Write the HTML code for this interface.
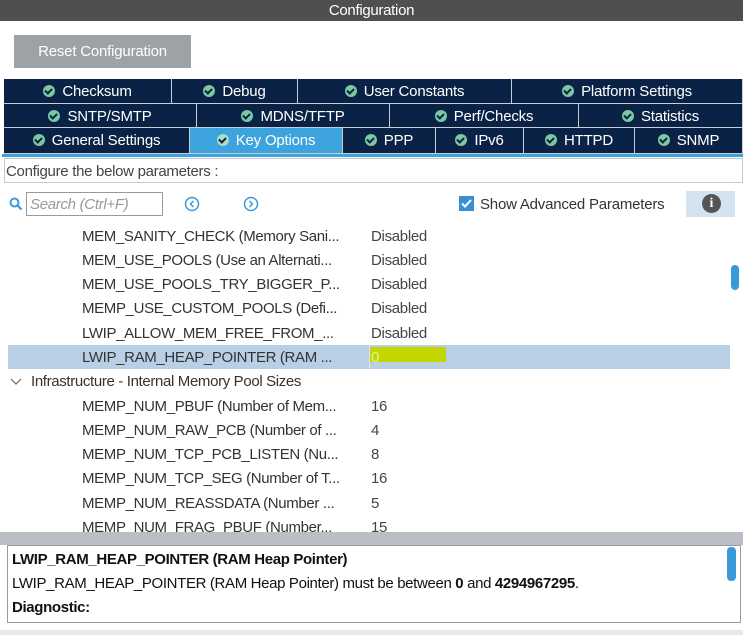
<!DOCTYPE html>
<html><head><style>
*{margin:0;padding:0;box-sizing:border-box}
body{width:743px;height:635px;background:#fff;font-family:"Liberation Sans",sans-serif;position:relative;overflow:hidden;color:#222}
.a{position:absolute;white-space:nowrap}
.title{left:0;top:0;width:743px;height:21px;background:#4f4f4f;color:#fff;font-size:15px;text-align:center;line-height:22px;letter-spacing:-0.3px}
.btn{left:14px;top:35px;width:177px;height:33px;background:#9da2a7;color:#fff;font-size:15px;line-height:34px;text-align:center;letter-spacing:-0.2px}
.tab{position:absolute;background:#0b2247;color:#fff;font-size:15px;text-align:center;border-right:1px solid #c9ced6;border-bottom:1px solid #c9ced6;letter-spacing:-0.2px}
.tab i{display:inline-block;width:12px;height:12px;border-radius:50%;background:#7cc8a0;margin-right:7px;vertical-align:-1px;position:relative}
.tab i:after{content:"";position:absolute;left:3px;top:2px;width:3px;height:5px;border:solid #0b2247;border-width:0 2px 2px 0;transform:rotate(45deg)}
.row{position:absolute;left:82px;font-size:15px;letter-spacing:-0.35px;color:#333;height:24px;line-height:26px}
.val{position:absolute;left:371px;font-size:15px;color:#444;letter-spacing:-0.3px;height:24px;line-height:26px}
</style></head><body>
<div class="a title">Configuration</div>
<div class="a btn">Reset Configuration</div>

<div class="tab" style="left:4px;top:79px;width:168px;height:25px;line-height:26px"><i></i>Checksum</div>
<div class="tab" style="left:172px;top:79px;width:126px;height:25px;line-height:26px"><i></i>Debug</div>
<div class="tab" style="left:298px;top:79px;width:214px;height:25px;line-height:26px"><i></i>User Constants</div>
<div class="tab" style="left:512px;top:79px;width:231px;height:25px;line-height:26px"><i></i>Platform Settings</div>
<div class="tab" style="left:4px;top:104px;width:193px;height:24px;line-height:25px"><i></i>SNTP/SMTP</div>
<div class="tab" style="left:197px;top:104px;width:193px;height:24px;line-height:25px"><i></i>MDNS/TFTP</div>
<div class="tab" style="left:390px;top:104px;width:189px;height:24px;line-height:25px"><i></i>Perf/Checks</div>
<div class="tab" style="left:579px;top:104px;width:164px;height:24px;line-height:25px"><i></i>Statistics</div>
<div class="tab" style="left:4px;top:128px;width:186px;height:26px;line-height:26px"><i></i>General Settings</div>
<div class="tab" style="left:190px;top:128px;width:153px;height:26px;line-height:26px;background:#3ca3dc"><i style="background:#a8dcc4"></i>Key Options</div>
<div class="tab" style="left:343px;top:128px;width:93px;height:26px;line-height:26px"><i></i>PPP</div>
<div class="tab" style="left:436px;top:128px;width:88px;height:26px;line-height:26px"><i></i>IPv6</div>
<div class="tab" style="left:524px;top:128px;width:111px;height:26px;line-height:26px"><i></i>HTTPD</div>
<div class="tab" style="left:635px;top:128px;width:108px;height:26px;line-height:26px"><i></i>SNMP</div>
<div class="a" style="left:2px;top:154px;width:741px;height:3px;background:#3ca3dc"></div>

<div class="a" style="left:4px;top:158px;width:739px;height:25px;border:1px solid #c8c8c8;font-size:15px;line-height:25px;color:#444;padding-left:1px;letter-spacing:-0.3px">Configure the below parameters :</div>

<svg class="a" style="left:9px;top:197px" width="14" height="14"><circle cx="5.5" cy="5.5" r="4" fill="none" stroke="#3a9ad9" stroke-width="2"/><line x1="8.5" y1="8.5" x2="12.5" y2="12.5" stroke="#3a9ad9" stroke-width="2.2"/></svg>
<div class="a" style="left:26px;top:192px;width:137px;height:24px;border:1px solid #999;font-size:15px;font-style:italic;color:#999;line-height:24px;padding-left:3px;letter-spacing:-0.3px">Search (Ctrl+F)</div>
<svg class="a" style="left:184px;top:196px" width="16" height="16"><circle cx="8" cy="8" r="6.5" fill="none" stroke="#3a9ad9" stroke-width="1.5"/><path d="M9.5 5 L6.5 8 L9.5 11" fill="none" stroke="#3a9ad9" stroke-width="1.5"/></svg>
<svg class="a" style="left:243px;top:196px" width="16" height="16"><circle cx="8" cy="8" r="6.5" fill="none" stroke="#3a9ad9" stroke-width="1.5"/><path d="M6.5 5 L9.5 8 L6.5 11" fill="none" stroke="#3a9ad9" stroke-width="1.5"/></svg>
<div class="a" style="left:459px;top:196px;width:15px;height:15px;background:#3a8fd0"></div>
<svg class="a" style="left:459px;top:196px" width="15" height="15"><path d="M3 7.5 L6 10.5 L12 4" fill="none" stroke="#fff" stroke-width="2"/></svg>
<div class="a" style="left:480px;top:192px;font-size:15px;line-height:25px;color:#333;letter-spacing:-0.2px">Show Advanced Parameters</div>
<div class="a" style="left:686px;top:191px;width:49px;height:26px;background:#d3e3f0"></div>
<div class="a" style="left:702px;top:194px;width:19px;height:19px;border-radius:50%;background:#555;color:#fff;font-weight:bold;font-size:14px;text-align:center;line-height:19px;font-family:'Liberation Serif',serif">i</div>

<div class="a" style="left:8px;top:345px;width:722px;height:24px;background:#b9cfe6"></div>
<div class="a" style="left:370px;top:347px;width:76px;height:15px;background:#c4d600"></div>
<div class="a" style="left:369px;top:345px;width:1px;height:24px;background:#dfe8f2"></div>

<div class="row" style="top:224px">MEM_SANITY_CHECK (Memory Sani...</div><div class="val" style="top:224px">Disabled</div>
<div class="row" style="top:248px">MEM_USE_POOLS (Use an Alternati...</div><div class="val" style="top:248px">Disabled</div>
<div class="row" style="top:272px">MEM_USE_POOLS_TRY_BIGGER_P...</div><div class="val" style="top:272px">Disabled</div>
<div class="row" style="top:296px">MEMP_USE_CUSTOM_POOLS (Defi...</div><div class="val" style="top:296px">Disabled</div>
<div class="row" style="top:321px">LWIP_ALLOW_MEM_FREE_FROM_...</div><div class="val" style="top:321px">Disabled</div>
<div class="row" style="top:345px">LWIP_RAM_HEAP_POINTER (RAM ...</div><div class="val" style="top:345px;color:#e8ee90">0</div>
<svg class="a" style="left:10px;top:378px" width="12" height="8"><path d="M1 1 L6 6 L11 1" fill="none" stroke="#666" stroke-width="1.2"/></svg>
<div class="row" style="top:369px;left:31px">Infrastructure - Internal Memory Pool Sizes</div>
<div class="row" style="top:394px">MEMP_NUM_PBUF (Number of Mem...</div><div class="val" style="top:394px">16</div>
<div class="row" style="top:418px">MEMP_NUM_RAW_PCB (Number of ...</div><div class="val" style="top:418px">4</div>
<div class="row" style="top:442px">MEMP_NUM_TCP_PCB_LISTEN (Nu...</div><div class="val" style="top:442px">8</div>
<div class="row" style="top:466px">MEMP_NUM_TCP_SEG (Number of T...</div><div class="val" style="top:466px">16</div>
<div class="row" style="top:491px">MEMP_NUM_REASSDATA (Number ...</div><div class="val" style="top:491px">5</div>
<div class="row" style="top:515px">MEMP_NUM_FRAG_PBUF (Number...</div><div class="val" style="top:515px">15</div>

<div class="a" style="left:731px;top:265px;width:8px;height:25px;border-radius:4px;background:#3a9ad9"></div>
<div class="a" style="left:0;top:532px;width:743px;height:13px;background:#b9bfc4"></div>
<div class="a" style="left:0;top:545px;width:743px;height:90px;background:#fff"></div>
<div class="a" style="left:7px;top:545px;width:734px;height:78px;border:1px solid #9a9a9a"></div>
<div class="a" style="left:727px;top:547px;width:9px;height:34px;border-radius:4px;background:#3a9ad9"></div>
<div class="a" style="left:12px;top:549px;font-size:15px;font-weight:bold;line-height:22px;color:#111;letter-spacing:-0.35px">LWIP_RAM_HEAP_POINTER (RAM Heap Pointer)</div>
<div class="a" style="left:12px;top:573px;font-size:15px;line-height:22px;color:#111;letter-spacing:-0.35px">LWIP_RAM_HEAP_POINTER (RAM Heap Pointer) must be between <b>0</b> and <b>4294967295</b>.</div>
<div class="a" style="left:12px;top:597px;font-size:15px;font-weight:bold;line-height:22px;color:#111;letter-spacing:-0.35px">Diagnostic:</div>
<div class="a" style="left:0;top:630px;width:743px;height:5px;background:#e8e8e8"></div>
</body></html>
